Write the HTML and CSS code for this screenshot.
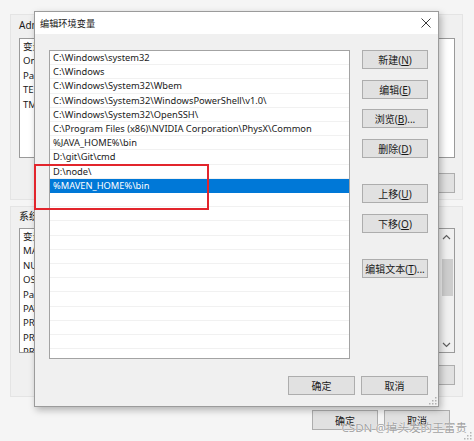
FILE: index.html
```html
<!DOCTYPE html>
<html lang="zh-CN">
<head>
<meta charset="utf-8">
<title>编辑环境变量</title>
<link rel="stylesheet" href="styles.css">
</head>
<body>
<div class="screen">
  <div class="bgwin">
    <section class="group group-user">
      <div class="glabel">Administrator 的用户变量(<u>U</u>)</div>
      <div class="blist blist-user">
        <div class="brow">变量</div>
        <div class="brow">OneDrive</div>
        <div class="brow">Path</div>
        <div class="brow">TEMP</div>
        <div class="brow">TMP</div>
      </div>
      <div class="gbtns">
        <button class="btn gbtn">新建(<u>N</u>)...</button>
        <button class="btn gbtn">编辑(<u>E</u>)...</button>
        <button class="btn gbtn">删除(<u>D</u>)</button>
      </div>
    </section>
    <section class="group group-sys">
      <div class="glabel">系统变量(<u>S</u>)</div>
      <div class="blist blist-sys">
        <div class="brows">
          <div class="brow">变量</div>
          <div class="brow">MAVEN_HOME</div>
          <div class="brow">NUMBER_OF_PROCESSORS</div>
          <div class="brow">OS</div>
          <div class="brow">Path</div>
          <div class="brow">PATHEXT</div>
          <div class="brow">PROCESSOR_ARCHITECTURE</div>
          <div class="brow">PROCESSOR_IDENTIFIER</div>
          <div class="brow">PROCESSOR_LEVEL</div>
        </div>
        <div class="vscroll">
          <span class="sarrow"><svg width="9" height="6" viewBox="0 0 9 6"><path d="M1 5 L4.5 1.5 L8 5" fill="none" stroke="#606060" stroke-width="1.2"/></svg></span>
          <span class="strack"><span class="sthumb"></span></span>
          <span class="sarrow"><svg width="9" height="6" viewBox="0 0 9 6"><path d="M1 1 L4.5 4.5 L8 1" fill="none" stroke="#606060" stroke-width="1.2"/></svg></span>
        </div>
      </div>
      <div class="gbtns gbtns-sys">
        <button class="btn gbtn">新建(<u>W</u>)...</button>
        <button class="btn gbtn">编辑(<u>I</u>)...</button>
        <button class="btn gbtn">删除(<u>L</u>)</button>
      </div>
    </section>
    <div class="bgfoot">
      <button class="btn fbtn">确定</button>
      <button class="btn fbtn">取消</button>
    </div>
  </div>
  <svg class="grip grip-bg" width="8" height="8" viewBox="0 0 8 8"><g fill="#b5b5b5"><rect x="6" y="0" width="1.5" height="1.5"/><rect x="3" y="3" width="1.5" height="1.5"/><rect x="6" y="3" width="1.5" height="1.5"/><rect x="0" y="6" width="1.5" height="1.5"/><rect x="3" y="6" width="1.5" height="1.5"/><rect x="6" y="6" width="1.5" height="1.5"/></g></svg>

  <div class="dialog">
    <div class="titlebar">
      <span class="title">编辑环境变量</span>
      <svg class="close" width="10" height="10" viewBox="0 0 10 10"><path d="M0.5 0.5 L9.5 9.5 M9.5 0.5 L0.5 9.5" stroke="#3a3a3a" stroke-width="1"/></svg>
    </div>
    <div class="dbody">
      <div class="plist">
        <div class="prow">C:\Windows\system32</div>
        <div class="prow">C:\Windows</div>
        <div class="prow">C:\Windows\System32\Wbem</div>
        <div class="prow">C:\Windows\System32\WindowsPowerShell\v1.0\</div>
        <div class="prow">C:\Windows\System32\OpenSSH\</div>
        <div class="prow">C:\Program Files (x86)\NVIDIA Corporation\PhysX\Common</div>
        <div class="prow">%JAVA_HOME%\bin</div>
        <div class="prow">D:\git\Git\cmd</div>
        <div class="prow">D:\node\</div>
        <div class="prow selected">%MAVEN_HOME%\bin</div>
      </div>
      <div class="sidebtns">
        <button class="btn sbtn">新建(<u>N</u>)</button>
        <button class="btn sbtn">编辑(<u>E</u>)</button>
        <button class="btn sbtn">浏览(<u>B</u>)...</button>
        <button class="btn sbtn">删除(<u>D</u>)</button>
        <button class="btn sbtn spaced">上移(<u>U</u>)</button>
        <button class="btn sbtn">下移(<u>O</u>)</button>
        <button class="btn sbtn spaced">编辑文本(<u>T</u>)...</button>
      </div>
    </div>
    <div class="dfoot">
      <button class="btn dbtn">确定</button>
      <button class="btn dbtn">取消</button>
    </div>
    <svg class="grip grip-dlg" width="8" height="8" viewBox="0 0 8 8"><g fill="#b0b0b0"><rect x="6" y="0" width="1.5" height="1.5"/><rect x="3" y="3" width="1.5" height="1.5"/><rect x="6" y="3" width="1.5" height="1.5"/><rect x="0" y="6" width="1.5" height="1.5"/><rect x="3" y="6" width="1.5" height="1.5"/><rect x="6" y="6" width="1.5" height="1.5"/></g></svg>
  </div>

  <div class="annot"></div>
  <div class="watermark">CSDN @掉头发的王富贵</div>
</div>
</body>
</html>
```

FILE: styles.css
```css
* { box-sizing: border-box; }
html, body { margin: 0; padding: 0; }
body {
  width: 474px;
  height: 441px;
  overflow: hidden;
  background: #f5f5f5;
  font-family: "Noto Sans", "Noto Sans CJK SC", sans-serif;
  font-size: 10px;
  color: #1a1a1a;
}
u { text-decoration: underline; text-underline-offset: 1px; }

.screen { position: relative; width: 474px; height: 441px; overflow: hidden; }

/* ---------- background window ---------- */
.bgwin {
  padding: 14px 11px 0 10px;
  display: flex;
  flex-direction: column;
}
.group {
  border: 1px solid #e4e4e4;
  background: #f0f0f0;
  padding: 0 7px 0 8px;
  display: flex;
  flex-direction: column;
}
.group-user { height: 186px; }
.group-sys { height: 191px; margin-top: 6px; }
.glabel { height: 18px; line-height: 18px; white-space: nowrap; font-size: 10px; }
.group-user .glabel { margin-top: 1px; }
.blist {
  background: #fff;
  border: 1px solid #9a9a9a;
  font-size: 9.6px;
}
.blist-user { margin-top: 4px; height: 120px; padding-top: 1px; }
.blist-sys { margin-top: 3px; height: 125px; display: flex; }
.brows { flex: 1; padding-top: 1px; overflow: hidden; }
.brow { height: 14.4px; line-height: 14.4px; padding-left: 3px; white-space: nowrap; }
.vscroll {
  width: 15px;
  background: #f0f0f0;
  display: flex;
  flex-direction: column;
}
.sarrow { height: 15px; display: flex; align-items: center; justify-content: center; }
.strack { flex: 1; padding: 15px 1px 0 3px; }
.sthumb { display: block; height: 37px; background: #cdcdcd; }

.gbtns { display: flex; justify-content: flex-end; gap: 8px; margin-top: 15px; }
.gbtns-sys { margin-top: 12px; }
.btn {
  font: inherit;
  color: #1a1a1a;
  background: #e1e1e1;
  border: 1px solid #adadad;
  padding: 0;
  margin: 0;
  text-align: center;
  white-space: nowrap;
}
.gbtn { width: 75px; height: 20px; }
.bgfoot { display: flex; justify-content: flex-end; gap: 6px; margin-top: 13px; padding-right: 13px; }
.fbtn { width: 66px; height: 20px; }

.grip { position: absolute; display: block; }
.grip-bg { right: 2px; bottom: 1px; }

/* ---------- foreground dialog ---------- */
.dialog {
  position: absolute;
  left: 34px;
  top: 11px;
  width: 405px;
  height: 396px;
  border: 1px solid #9b9b9b;
  background: #f0f0f0;
  box-shadow: 2px 3px 7px rgba(0, 0, 0, 0.28);
  display: flex;
  flex-direction: column;
}
.titlebar {
  height: 22px;
  background: #fff;
  display: flex;
  align-items: center;
  justify-content: space-between;
  padding: 0 7px 0 5px;
}
.title { font-size: 9.2px; }
.close { display: block; }
.dbody {
  display: grid;
  grid-template-columns: 301px 66px;
  column-gap: 12px;
  padding: 16px 10px 0 14px;
}
.plist {
  height: 309px;
  border: 1px solid #a3a3a3;
  background: repeating-linear-gradient(to bottom, #ffffff 0, #ffffff 13.2px, #f1f1f1 13.2px, #f1f1f1 14.2px);
  overflow: hidden;
  font-size: 9.3px;
}
.prow {
  height: 14.2px;
  line-height: 14.2px;
  padding-left: 3px;
  white-space: nowrap;
}
.prow.selected { background: #0078d7; color: #fff; }

.sidebtns { display: flex; flex-direction: column; gap: 10.5px; }
.sbtn { height: 19px; }
.sbtn.spaced { margin-top: 16px; }

.dfoot {
  display: flex;
  justify-content: flex-end;
  gap: 6px;
  padding-right: 10px;
  margin-top: 17px;
}
.dbtn { width: 67px; height: 18.5px; }
.grip-dlg { right: 1px; bottom: 1px; }

/* ---------- overlays ---------- */
.annot {
  position: absolute;
  left: 34px;
  top: 164px;
  width: 175px;
  height: 46px;
  border: 2px solid #e2252c;
}
.watermark {
  position: absolute;
  right: 7px;
  top: 420px;
  font-size: 11.6px;
  line-height: 15px;
  white-space: nowrap;
  color: #a2a2a2;
  text-shadow: 0 0 1px #ffffff, 0 0 1px #ffffff;
}
```
